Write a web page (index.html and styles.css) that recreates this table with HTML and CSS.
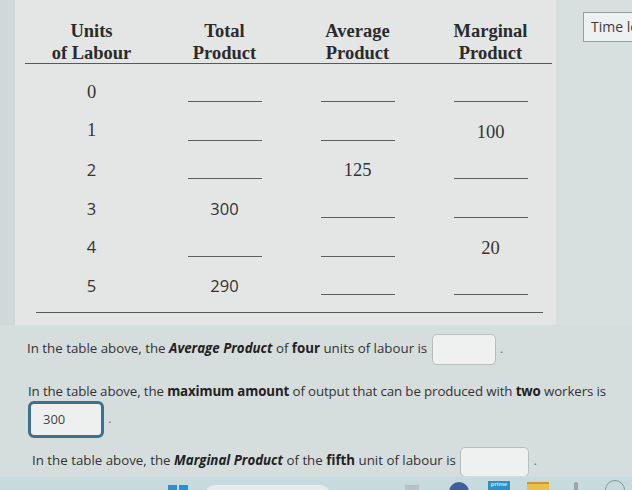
FILE: index.html
```html
<!DOCTYPE html>
<html lang="en">
<head>
<meta charset="utf-8">
<title>Product of Labour</title>
<link rel="stylesheet" href="styles.css">
</head>
<body>
<div class="screen">
  <div class="top">
    <div class="edge"></div>
    <div class="panel">
      <div class="table">
        <div class="head">
          <div class="hc">Units<br>of Labour</div>
          <div class="hc">Total<br>Product</div>
          <div class="hc">Average<br>Product</div>
          <div class="hc">Marginal<br>Product</div>
        </div>
        <div class="rule"></div>
        <div class="rows">
          <div class="row">
            <div class="c serif">0</div>
            <div class="c"><span class="blank"></span></div>
            <div class="c"><span class="blank"></span></div>
            <div class="c"><span class="blank"></span></div>
          </div>
          <div class="row">
            <div class="c serif">1</div>
            <div class="c"><span class="blank"></span></div>
            <div class="c"><span class="blank"></span></div>
            <div class="c serif num">100</div>
          </div>
          <div class="row">
            <div class="c sans">2</div>
            <div class="c"><span class="blank"></span></div>
            <div class="c serif num">125</div>
            <div class="c"><span class="blank"></span></div>
          </div>
          <div class="row">
            <div class="c sans">3</div>
            <div class="c sans">300</div>
            <div class="c"><span class="blank"></span></div>
            <div class="c"><span class="blank"></span></div>
          </div>
          <div class="row">
            <div class="c sans">4</div>
            <div class="c"><span class="blank"></span></div>
            <div class="c"><span class="blank"></span></div>
            <div class="c serif num">20</div>
          </div>
          <div class="row">
            <div class="c sans">5</div>
            <div class="c sans">290</div>
            <div class="c"><span class="blank"></span></div>
            <div class="c"><span class="blank"></span></div>
          </div>
        </div>
        <div class="rule bottom"></div>
      </div>
    </div>
    <div class="side">
      <div class="timer">Time le</div>
    </div>
  </div>

  <div class="questions">
    <p class="q q1">In the table above, the <b><i>Average Product</i></b> of <b>four</b> units of labour is <span class="box"></span><span class="dot">.</span></p>
    <p class="q q2">In the table above, the <b>maximum amount</b> of output that can be produced with <b>two</b> workers is</p>
    <p class="q q2b"><span class="box filled">300</span><span class="dot">.</span></p>
    <p class="q q3">In the table above, the <b><i>Marginal Product</i></b> of the <b>fifth</b> unit of labour is <span class="box wide"></span><span class="dot">.</span></p>
  </div>

  <div class="taskbar">
    <span class="win"><i></i><i></i></span>
    <span class="search"></span>
    <span class="tb gray"></span>
    <span class="tb edgeicon"></span>
    <span class="tb prime">prime</span>
    <span class="tb folder"></span>
    <span class="tb pencil"></span>
    <span class="tb ring"></span>
  </div>
</div>
</body>
</html>
```

FILE: styles.css
```css
html, body {
  margin: 0;
  padding: 0;
}
body {
  width: 632px;
  height: 490px;
  overflow: hidden;
  background: #d6dddd;
  font-family: "Open Sans", "Noto Sans", sans-serif;
  color: #2e2e2e;
}
.screen {
  display: flex;
  flex-direction: column;
  height: 490px;
}
.top {
  display: flex;
  height: 330px;
}
.edge {
  width: 15px;
  background: #cfd9d9;
}
.panel {
  width: 541px;
  background: #e3e6e5;
}
.table {
  padding: 20px 0 0 10px;
}
.head {
  display: grid;
  grid-template-columns: repeat(4, 133px);
}
.hc {
  font-family: "Liberation Serif", "Times New Roman", serif;
  font-weight: bold;
  font-size: 18.5px;
  line-height: 22px;
  text-align: center;
  color: #2b2b2b;
}
.rule {
  height: 0;
  border-top: 1.5px solid #555a5a;
  width: 527px;
  margin-top: -1px;
}
.rule.bottom {
  width: 507px;
  margin: 7px 0 0 11px;
}
.rows {
  padding-top: 9px;
}
.row {
  display: grid;
  grid-template-columns: repeat(4, 133px);
  height: 38.6px;
}
.c {
  display: flex;
  align-items: center;
  justify-content: center;
  font-size: 16px;
  color: #333;
}
.serif {
  font-family: "Liberation Serif", "Times New Roman", serif;
  font-size: 18.5px;
}
.sans {
  font-family: "Open Sans", "Noto Sans", sans-serif;
  font-size: 16.5px;
}
.num {
  padding-top: 3px;
}
.blank {
  display: block;
  width: 74px;
  height: 19px;
  border-bottom: 1.5px solid #5a5e5e;
}
.side {
  flex: 1;
  background: #d8dfdf;
  padding: 12px 0 0 27px;
  overflow: hidden;
}
.timer {
  height: 30px;
  box-sizing: border-box;
  border: 1px solid #9a9e9e;
  border-right: none;
  background: #eef1f1;
  padding: 0 0 0 7px;
  font-size: 14px;
  line-height: 28px;
  color: #3c3c3c;
  white-space: nowrap;
  overflow: hidden;
}
.questions {
  flex: 1;
  padding: 7px 0 0 0;
}
.q {
  margin: 0;
  font-size: 13.3px;
  color: #333;
  white-space: nowrap;
}
.q b {
  color: #222;
}
.q1 {
  padding-left: 27px;
  height: 33px;
  line-height: 33px;
}
.q2 {
  padding-left: 28px;
  margin-top: 16px;
  height: 20px;
  line-height: 20px;
  letter-spacing: -0.12px;
}
.q2b {
  padding-left: 28px;
  margin-top: -2px;
  height: 38px;
  line-height: 38px;
}
.q3 {
  padding-left: 32px;
  margin-top: 8px;
  height: 31px;
  line-height: 31px;
}
.box {
  display: inline-block;
  vertical-align: middle;
  width: 64px;
  height: 31px;
  box-sizing: border-box;
  border: 1px solid #b9bebe;
  border-radius: 5px;
  background: #eef1f0;
  margin-left: 1px;
}
.box.wide {
  width: 69px;
  height: 30px;
}
.box.filled {
  width: 76px;
  height: 37px;
  margin-left: 0;
  border: 3px solid #3e6f8c;
  border-radius: 6px;
  background: #edf0ef;
  padding-left: 12px;
  font-size: 13px;
  line-height: 31px;
  color: #444;
}
.dot {
  margin-left: 4px;
  color: #777;
}
.taskbar {
  height: 13px;
  background: #c7dadd;
  position: relative;
  overflow: hidden;
  border-top: 1px solid #d0dcdc;
}
.win {
  position: absolute;
  left: 168px;
  top: 8px;
  display: flex;
  gap: 2px;
}
.win i {
  display: block;
  width: 9px;
  height: 9px;
  background: #2b8fd0;
}
.search {
  position: absolute;
  left: 205px;
  top: 8px;
  width: 125px;
  height: 20px;
  border-radius: 10px;
  background: #e6eced;
}
.tb {
  position: absolute;
  top: 8px;
}
.tb.gray {
  left: 405px;
  width: 14px;
  height: 10px;
  background: #b8c2c4;
}
.tb.edgeicon {
  left: 449px;
  top: 5px;
  width: 20px;
  height: 20px;
  border-radius: 50%;
  background: #3f5f9c;
}
.tb.prime {
  left: 488px;
  top: 4px;
  width: 22px;
  height: 12px;
  background: #2e8fc9;
  color: #cfe8f8;
  font-size: 6px;
  line-height: 6px;
  text-align: center;
  font-family: "Liberation Sans", sans-serif;
  font-weight: bold;
}
.tb.folder {
  left: 527px;
  top: 5px;
  width: 22px;
  height: 12px;
  background: #e8c04f;
  border-top: 2px solid #c79a2c;
}
.tb.pencil {
  left: 574px;
  top: 5px;
  width: 4px;
  height: 10px;
  background: #9aa5a7;
  border-radius: 2px 2px 0 0;
}
.tb.ring {
  left: 605px;
  top: 3px;
  width: 18px;
  height: 18px;
  border-radius: 50%;
  border: 1.5px solid #8a9598;
}
```
